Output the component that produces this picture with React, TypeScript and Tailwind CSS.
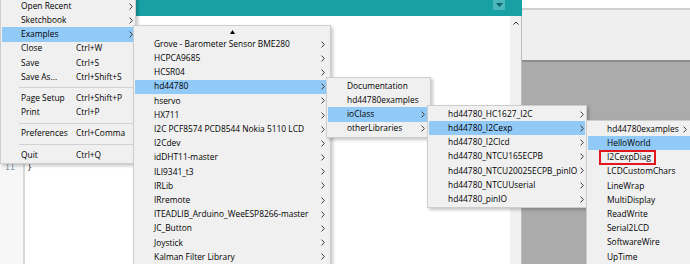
import React from 'react';

// --- Menu data ---

type Entry =
    | { label: string; shortcut?: string; sub?: boolean; active?: boolean; marked?: boolean }
    | 'sep';

const fileMenu: Entry[] = [
    { label: 'Open Recent', sub: true },
    { label: 'Sketchbook', sub: true },
    { label: 'Examples', sub: true, active: true },
    { label: 'Close', shortcut: 'Ctrl+W' },
    { label: 'Save', shortcut: 'Ctrl+S' },
    { label: 'Save As...', shortcut: 'Ctrl+Shift+S' },
    'sep',
    { label: 'Page Setup', shortcut: 'Ctrl+Shift+P' },
    { label: 'Print', shortcut: 'Ctrl+P' },
    'sep',
    { label: 'Preferences', shortcut: 'Ctrl+Comma' },
    'sep',
    { label: 'Quit', shortcut: 'Ctrl+Q' },
];

const examplesMenu: Entry[] = [
    'Grove - Barometer Sensor BME280',
    'HCPCA9685',
    'HCSR04',
    'hd44780',
    'hservo',
    'HX711',
    'I2C PCF8574 PCD8544 Nokia 5110 LCD',
    'I2Cdev',
    'idDHT11-master',
    'ILI9341_t3',
    'IRLib',
    'IRremote',
    'ITEADLIB_Arduino_WeeESP8266-master',
    'JC_Button',
    'Joystick',
    'Kalman Filter Library',
].map((label) => ({ label, sub: true, active: label === 'hd44780' }));

const hd44780Menu: Entry[] = [
    { label: 'Documentation' },
    { label: 'hd44780examples' },
    { label: 'ioClass', sub: true, active: true },
    { label: 'otherLibraries', sub: true },
];

const ioClassMenu: Entry[] = [
    'hd44780_HC1627_I2C',
    'hd44780_I2Cexp',
    'hd44780_I2Clcd',
    'hd44780_NTCU165ECPB',
    'hd44780_NTCU20025ECPB_pinIO',
    'hd44780_NTCUUserial',
    'hd44780_pinIO',
].map((label) => ({ label, sub: true, active: label === 'hd44780_I2Cexp' }));

const i2cexpMenu: Entry[] = [
    { label: 'hd44780examples', sub: true },
    { label: 'HelloWorld', active: true },
    { label: 'I2CexpDiag', marked: true },
    { label: 'LCDCustomChars' },
    { label: 'LineWrap' },
    { label: 'MultiDisplay' },
    { label: 'ReadWrite' },
    { label: 'Serial2LCD' },
    { label: 'SoftwareWire' },
    { label: 'UpTime' },
];

// --- Small drawings ---

const Chevron = () => (
    <svg width="4" height="7" viewBox="0 0 4 7" className="shrink-0">
        <path d="M0.6 0.6 L3.3 3.5 L0.6 6.4" fill="none" stroke="#3c3c3c" strokeWidth="1" />
    </svg>
);

// --- Popup menu ---

interface MenuProps {
    entries: Entry[];
    className: string;
    arrowPad: string;
    keyCol?: boolean;
    scrollUp?: boolean;
}

const Menu: React.FC<MenuProps> = ({ entries, className, arrowPad, keyCol, scrollUp }) => (
    <div className={`absolute border border-[#cdcdcd] bg-[#f0f0f0] p-px shadow-[2px_2px_3px_rgba(0,0,0,0.22)] ${className}`}>
        {scrollUp && (
            <div className="flex h-[10px] items-center justify-center">
                <svg width="5" height="4" viewBox="0 0 5 4">
                    <path d="M2.5 0 L5 4 L0 4 Z" fill="#000" />
                </svg>
            </div>
        )}
        {entries.map((e, i) =>
            e === 'sep' ? (
                <div key={i} className="flex h-[7px] items-center pl-[17px]">
                    <div className="h-px w-full bg-[#d2d2d2]" />
                </div>
            ) : (
                <div
                    key={i}
                    className={`flex h-[14.2px] items-center justify-between pl-[19px] ${arrowPad} ${e.active ? 'bg-[#91c9f7]' : ''}`}
                >
                    <div className="flex items-center whitespace-nowrap">
                        <span className={`relative ${keyCol ? 'w-[55px]' : ''}`}>
                            {e.label}
                            {e.marked && (
                                <span className="absolute -top-[3px] -bottom-[3px] -left-[8px] -right-[5px] border-2 border-[#e3161d]" />
                            )}
                        </span>
                        {e.shortcut && <span>{e.shortcut}</span>}
                    </div>
                    {e.sub && <Chevron />}
                </div>
            )
        )}
    </div>
);

// --- Page ---

const App: React.FC = () => {
    return (
        <div className="relative h-[264px] w-[690px] overflow-hidden bg-white font-['Open_Sans',sans-serif] text-[8.4px] leading-none text-black">
            <div className="flex h-full">
                {/* IDE window */}
                <div className="flex w-[522px] flex-col">
                    <div className="flex h-[16px] justify-end bg-[#17a1a5] pr-[17px]">
                        <div className="flex h-[10px] w-[12px] items-center justify-center bg-[#4cb7ba]">
                            <svg width="7" height="4" viewBox="0 0 7 4">
                                <path d="M0 0 H7 L3.5 4 Z" fill="#0b6468" />
                            </svg>
                        </div>
                    </div>
                    <div className="flex flex-1">
                        <div className="w-[25px] border-r-2 border-[#d8d8d8] bg-[#f7f7f7] pt-[146px] pr-[8px] text-right font-['DejaVu_Sans_Mono',monospace] text-[8.5px] leading-[11px] text-[#8b98a6]">
                            11
                        </div>
                        <div className="flex-1 bg-white pt-[146px] pl-[2px] font-['DejaVu_Sans_Mono',monospace] text-[8.5px] leading-[11px] text-[#333]">
                            {'}'}
                        </div>
                        <div className="flex w-[12px] justify-center border-r border-[#bdbdbd] bg-[#f0f0f0] pt-[5px]">
                            <svg width="6" height="4" viewBox="0 0 6 4">
                                <path d="M0.5 3.5 L3 1 L5.5 3.5" fill="none" stroke="#333" strokeWidth="1" />
                            </svg>
                        </div>
                    </div>
                </div>

                {/* Windows behind, on the right */}
                <div className="flex flex-1 flex-col">
                    <div className="h-[8px] bg-white" />
                    <div className="h-[2px] bg-[#cfcfcf]" />
                    <div className="h-[50px] bg-[#efefef]" />
                    <div className="h-[2px] bg-[#8d8d8d]" />
                    <div className="flex-1 bg-[#ababab]" />
                </div>
            </div>

            {/* Open menus */}
            <Menu entries={fileMenu} keyCol className="left-0 top-[-3px] w-[136px]" arrowPad="pr-[1px]" />
            <Menu entries={examplesMenu} scrollUp className="left-[133px] top-[25px] w-[198px]" arrowPad="pr-[4px]" />
            <Menu entries={hd44780Menu} className="left-[326px] top-[77px] w-[105px]" arrowPad="pr-[4px]" />
            <Menu entries={ioClassMenu} className="left-[427px] top-[105px] w-[160px]" arrowPad="pr-[1px]" />
            <Menu entries={i2cexpMenu} className="left-[586px] top-[120px] w-[108px]" arrowPad="pr-[5px]" />
        </div>
    );
};

export default App;
